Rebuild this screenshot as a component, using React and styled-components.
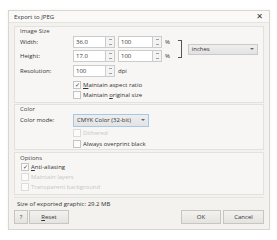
import React from "react";
import styled, { createGlobalStyle } from "styled-components";

const GlobalStyle = createGlobalStyle`
  html, body {
    margin: 0;
    padding: 0;
    background: #ffffff;
  }
  body {
    font-family: "Open Sans", "Noto Sans", sans-serif;
    font-size: 6px;
    color: #333333;
  }
`;

const Dialog = styled.div`
  margin: 10px 0 0 8px;
  width: 260px;
  height: 218px;
  border: 1px solid #d8d6d3;
  background: #f4f2ef;
  box-shadow: 0 0 3px rgba(0, 0, 0, 0.06);
  display: flex;
  flex-direction: column;
`;

const TitleBar = styled.div`
  height: 12px;
  display: flex;
  align-items: center;
  justify-content: space-between;
  padding: 0 6px 0 5px;
  background: #faf9f8;
  border-bottom: 1px solid #e6e4e1;
`;

const Close = styled.span`
  font-family: "DejaVu Sans", sans-serif;
  font-size: 8px;
  font-weight: bold;
  color: #333;
  line-height: 1;
`;

const Body = styled.div`
  flex: 1;
  padding: 3px 5px 5px 5px;
  display: flex;
  flex-direction: column;
`;

const Group = styled.section`
  margin: 0 0 ${(p) => p.$gap || 0}px 0;
  padding: 0 5px 1px 5px;
  border: 1px solid #e3e1dd;
  background: #f7f6f4;
  height: ${(p) => p.$h}px;
  box-sizing: border-box;
`;

const Header = styled.div`
  height: ${(p) => p.$h || 8}px;
  display: flex;
  align-items: center;
  color: #444;
`;

const Row = styled.div`
  display: flex;
  align-items: center;
  height: ${(p) => p.$h || 14}px;
`;

const Label = styled.span`
  width: 53px;
  flex-shrink: 0;
`;

const Field = styled.div`
  display: flex;
  align-items: stretch;
  height: 12px;
  margin-right: ${(p) => p.$mr || 0}px;
`;

const Input = styled.div`
  width: ${(p) => p.$w || 30}px;
  border: 1px solid #cccccc;
  border-right: none;
  background: #ffffff;
  padding-left: 2px;
  display: flex;
  align-items: center;
`;

const Spinner = styled.div`
  width: 8px;
  border: 1px solid #cccccc;
  background: #f3f3f3;
  display: flex;
  flex-direction: column;
  align-items: center;
  justify-content: space-around;
`;

const Tick = styled.span`
  width: 3px;
  height: 1px;
  background: #a0a0a0;
`;

const Unit = styled.span`
  margin-left: 3px;
`;

const SizeGrid = styled.div`
  display: flex;
  align-items: center;
`;

const Bracket = styled.div`
  width: 3px;
  height: 16px;
  border: 1px solid #555;
  border-left: none;
  margin: 0 6px 0 8px;
`;

const Select = styled.div`
  width: ${(p) => p.$w}px;
  height: ${(p) => p.$h || 11}px;
  box-sizing: border-box;
  border: 1px solid ${(p) => (p.$focus ? "#a6c8e8" : "#cacaca")};
  background: linear-gradient(#eeeeee, #e3e3e3);
  display: flex;
  align-items: center;
  justify-content: space-between;
  padding: 0 3px 0 3px;
`;

const Caret = styled.span`
  width: 0;
  height: 0;
  border-left: 2px solid transparent;
  border-right: 2px solid transparent;
  border-top: 2px solid #666;
`;

const Check = styled.div`
  display: flex;
  align-items: center;
  height: ${(p) => p.$h || 10}px;
  margin-top: ${(p) => p.$mt || 0}px;
  padding-left: ${(p) => p.$indent ?? 53}px;
  color: ${(p) => (p.$disabled ? "#c8c6c3" : "#333333")};
`;

const Box = styled.span`
  width: 6px;
  height: 6px;
  border: 1px solid ${(p) => (p.$disabled ? "#dedcd9" : "#c4c4c4")};
  background: #fbfbfb;
  margin-right: 2px;
  display: flex;
  align-items: center;
  justify-content: center;
  font-size: 6px;
  line-height: 1;
  color: #333;
`;

const U = styled.span`
  text-decoration: underline;
`;

const SizeText = styled.div`
  height: 11px;
  display: flex;
  align-items: center;
  padding-left: 3px;
  margin-top: 2px;
  border-top: 1px solid #e6e4e1;
`;

const Buttons = styled.div`
  display: flex;
  align-items: center;
  margin-top: 1px;
`;

const Button = styled.button`
  width: ${(p) => p.$w}px;
  height: 14px;
  margin: 0 ${(p) => p.$mr || 0}px 0 0;
  padding: 0;
  font-family: inherit;
  font-size: 6px;
  color: #333333;
  border: 1px solid #c8c6c3;
  background: linear-gradient(#f3f2f0, #e5e3e0);
`;

const Spacer = styled.div`
  flex: 1;
`;

function NumField({ value, w, mr }) {
  return (
    <Field $mr={mr}>
      <Input $w={w}>{value}</Input>
      <Spinner>
        <Tick />
        <Tick />
      </Spinner>
    </Field>
  );
}

export default function App() {
  return (
    <>
      <GlobalStyle />
      <Dialog>
        <TitleBar>
          <span>Export to JPEG</span>
          <Close>✕</Close>
        </TitleBar>
        <Body>
          <Group $h={77} $gap={1}>
            <Header>Image Size</Header>
            <SizeGrid>
              <div>
                <Row>
                  <Label>Width:</Label>
                  <NumField value="36.0" w={29} mr={3} />
                  <NumField value="100" w={31} />
                  <Unit>%</Unit>
                </Row>
                <Row>
                  <Label>Height:</Label>
                  <NumField value="17.0" w={29} mr={3} />
                  <NumField value="100" w={31} />
                  <Unit>%</Unit>
                </Row>
              </div>
              <Bracket />
              <Select $w={76}>
                <span>inches</span>
                <Caret />
              </Select>
            </SizeGrid>
            <Row $h={15}>
              <Label>Resolution:</Label>
              <NumField value="100" w={29} />
              <Unit>dpi</Unit>
            </Row>
            <Check $mt={2}>
              <Box>✓</Box>
              <span>
                <U>M</U>aintain aspect ratio
              </span>
            </Check>
            <Check>
              <Box />
              <span>
                Maintain <U>o</U>riginal size
              </span>
            </Check>
          </Group>

          <Group $h={46} $gap={2}>
            <Header>Color</Header>
            <Row $h={14}>
              <Label>Color mode:</Label>
              <Select $w={76} $h={13} $focus>
                <span>CMYK Color (32-bit)</span>
                <Caret />
              </Select>
            </Row>
            <Check $disabled $h={11}>
              <Box $disabled />
              <span>Dithered</span>
            </Check>
            <Check $h={11}>
              <Box />
              <span>
                Alwa<U>y</U>s overprint black
              </span>
            </Check>
          </Group>

          <Group $h={43}>
            <Header $h={9}>Options</Header>
            <Check $indent={1}>
              <Box>✓</Box>
              <span>
                <U>A</U>nti-aliasing
              </span>
            </Check>
            <Check $indent={1} $disabled>
              <Box $disabled />
              <span>Maintain layers</span>
            </Check>
            <Check $indent={1} $disabled>
              <Box $disabled />
              <span>Transparent background</span>
            </Check>
          </Group>

          <SizeText>Size of exported graphic: 29.2 MB</SizeText>

          <Buttons>
            <Button $w={14} $mr={1}>?</Button>
            <Button $w={40}>
              <U>R</U>eset
            </Button>
            <Spacer />
            <Button $w={40} $mr={2}>OK</Button>
            <Button $w={41}>Cancel</Button>
          </Buttons>
        </Body>
      </Dialog>
    </>
  );
}
